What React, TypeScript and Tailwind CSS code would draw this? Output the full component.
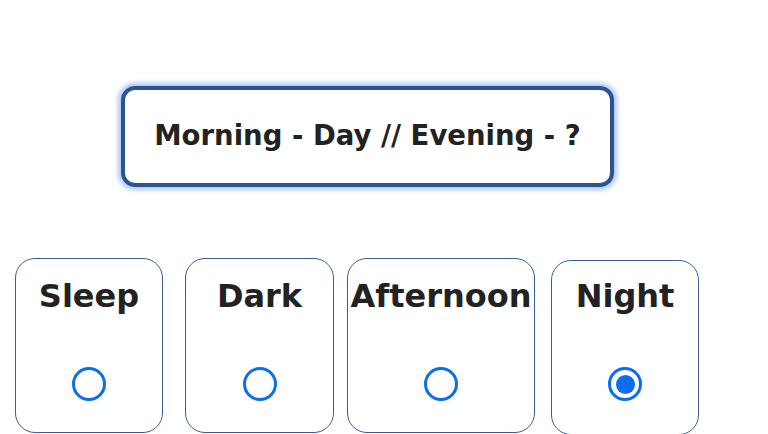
import { useState } from 'react'

const OPTIONS = [
  { label: 'Sleep', width: 'w-[148px]', offset: 'mt-0 pt-[17px]', gap: 'ml-0' },
  { label: 'Dark', width: 'w-[149px]', offset: 'mt-0 pt-[17px]', gap: 'ml-[22px]' },
  { label: 'Afternoon', width: 'w-[188px]', offset: 'mt-0 pt-[17px]', gap: 'ml-[13px]' },
  { label: 'Night', width: 'w-[148px]', offset: 'mt-[2px] pt-[15px]', gap: 'ml-[16px]' },
]

function Radio({ checked }: { checked: boolean }) {
  return (
    <span className="w-[34px] h-[34px] rounded-full border-[3px] border-[#0b6cf0] flex items-center justify-center">
      {checked ? <span className="w-[19px] h-[19px] rounded-full bg-[#0b6cf0]" /> : null}
    </span>
  )
}

export default function App() {
  const [selected, setSelected] = useState('Night')

  return (
    <div className="w-[768px] h-[434px] overflow-hidden bg-white font-['DejaVu_Sans',sans-serif] text-[#222]">
      <div className="pt-[86px] pl-[121px]">
        <div className="w-[493px] h-[101px] rounded-[14px] border-4 border-[#2e5394] shadow-[0_0_5px_3px_#a9c6f5] flex items-center justify-center text-[27.5px] font-bold pb-[2px]">
          Morning - Day // Evening - ?
        </div>
      </div>

      <div className="flex items-start pl-[15px] mt-[71px]">
        {OPTIONS.map((o) => (
          <button
            key={o.label}
            onClick={() => setSelected(o.label)}
            className={`${o.width} ${o.offset} ${o.gap} h-[175px] shrink-0 rounded-[20px] border-[1.5px] border-[#3b5b9b] bg-white flex flex-col items-center`}
          >
            <span className="text-[32px] leading-[40px] font-bold whitespace-nowrap">{o.label}</span>
            <span className="mt-[51px]">
              <Radio checked={selected === o.label} />
            </span>
          </button>
        ))}
      </div>
    </div>
  )
}
